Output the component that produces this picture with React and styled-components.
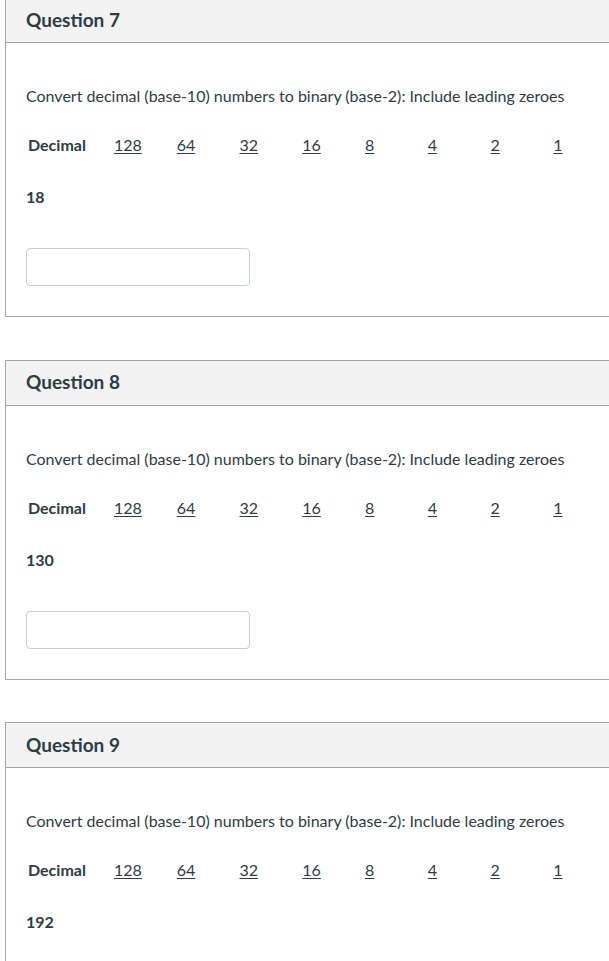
import React from 'react'
import styled, { createGlobalStyle } from 'styled-components'

const GlobalStyle = createGlobalStyle`
  html, body {
    margin: 0;
    padding: 0;
    background: #fff;
  }
  body {
    font-family: Lato, "Open Sans", "Liberation Sans", sans-serif;
    color: #2d3b45;
  }
`

const Viewport = styled.div`
  height: 961px;
  overflow: hidden;
`

const Page = styled.div`
  padding-left: 5px;
  margin-top: -3px;
`

const Card = styled.section`
  width: calc(100% + 20px);
  box-sizing: border-box;
  border: 1px solid #a5a5a5;
  margin-bottom: 42.5px;
  background: #fff;
`

const Header = styled.div`
  height: 42px;
  display: flex;
  align-items: center;
  padding: 0 20px 2px;
  background: #f2f2f2;
  border-bottom: 1px solid #a5a5a5;
  h2 {
    margin: 0;
    font-size: 19px;
    font-weight: 700;
  }
`

const Body = styled.div`
  padding: 43px 20px 30px;
  display: flex;
  flex-direction: column;
  align-items: flex-start;
`

const Prompt = styled.p`
  margin: 0 0 29px;
  font-size: 16px;
  line-height: 20px;
`

const BitRow = styled.div`
  display: grid;
  grid-template-columns: 86px repeat(8, 62.75px);
  margin: 0 0 32px 2px;
  font-size: 16px;
  line-height: 20px;
`

const Cell = styled.span`
  font-weight: ${p => (p.$head ? 700 : 400)};
  text-decoration: ${p => (p.$head ? 'none' : 'underline')};
  text-underline-offset: 2px;
`

const Value = styled.div`
  font-size: 16px;
  line-height: 20px;
  font-weight: 700;
  margin-bottom: 41px;
`

const Answer = styled.input`
  box-sizing: border-box;
  width: 224px;
  height: 38px;
  border: 1px solid #c7cdd1;
  border-radius: 4px;
  padding: 0 8px;
  font: inherit;
  outline: none;
`

const bits = [128, 64, 32, 16, 8, 4, 2, 1]

const questions = [
  { num: 7, value: 18 },
  { num: 8, value: 130 },
  { num: 9, value: 192 },
]

const Question = ({ num, value }) => (
  <Card>
    <Header>
      <h2>Question {num}</h2>
    </Header>
    <Body>
      <Prompt>Convert decimal (base-10) numbers to binary (base-2): Include leading zeroes</Prompt>
      <BitRow>
        <Cell $head>Decimal</Cell>
        {bits.map(b => (
          <Cell key={b}>{b}</Cell>
        ))}
      </BitRow>
      <Value>{value}</Value>
      <Answer type="text" aria-label={`Answer for question ${num}`} />
    </Body>
  </Card>
)

export default function App() {
  return (
    <>
      <GlobalStyle />
      <Viewport>
        <Page>
          {questions.map(q => (
            <Question key={q.num} {...q} />
          ))}
        </Page>
      </Viewport>
    </>
  )
}
